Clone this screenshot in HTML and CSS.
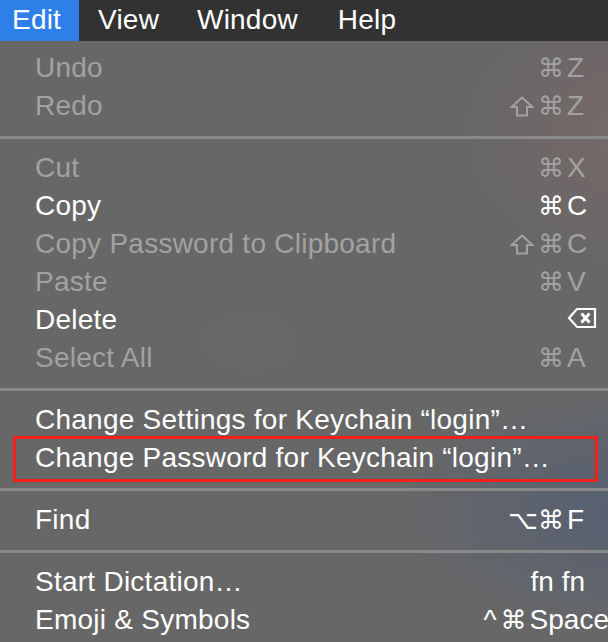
FILE: index.html
```html
<!DOCTYPE html>
<html lang="en">
<head>
<meta charset="utf-8">
<title>Edit menu</title>
<link rel="stylesheet" href="styles.css">
</head>
<body>
<div class="screen">
  <nav class="menubar">
    <span class="mb-item active">Edit</span>
    <span class="mb-item">View</span>
    <span class="mb-item">Window</span>
    <span class="mb-item">Help</span>
  </nav>
  <div class="menu">
    <div class="item disabled"><span class="label">Undo</span><span class="sc"><span class="mods">⌘</span><span class="key">Z</span></span></div>
    <div class="item disabled"><span class="label">Redo</span><span class="sc"><svg class="shift" width="24" height="21" viewBox="0 0 24 21"><path d="M12 1.5 L22.5 11 H17 V19.5 H7 V11 H1.5 Z" fill="none" stroke="currentColor" stroke-width="2" stroke-linejoin="miter"/></svg><span class="mods">⌘</span><span class="key">Z</span></span></div>
    <div class="sep"></div>
    <div class="item disabled"><span class="label">Cut</span><span class="sc"><span class="mods">⌘</span><span class="key">X</span></span></div>
    <div class="item"><span class="label">Copy</span><span class="sc"><span class="mods">⌘</span><span class="key">C</span></span></div>
    <div class="item disabled"><span class="label">Copy Password to Clipboard</span><span class="sc"><svg class="shift" width="24" height="21" viewBox="0 0 24 21"><path d="M12 1.5 L22.5 11 H17 V19.5 H7 V11 H1.5 Z" fill="none" stroke="currentColor" stroke-width="2" stroke-linejoin="miter"/></svg><span class="mods">⌘</span><span class="key">C</span></span></div>
    <div class="item disabled"><span class="label">Paste</span><span class="sc"><span class="mods">⌘</span><span class="key">V</span></span></div>
    <div class="item"><span class="label">Delete</span><span class="sc"><span class="key del"><svg width="30" height="22" viewBox="0 0 30 22"><path d="M2 11 L10 2 H28 V20 H10 Z" fill="none" stroke="#fff" stroke-width="2.2" stroke-linejoin="miter"/><path d="M14.5 6.5 L22.5 15.5 M22.5 6.5 L14.5 15.5" stroke="#fff" stroke-width="3"/></svg></span></span></div>
    <div class="item disabled"><span class="label">Select All</span><span class="sc"><span class="mods">⌘</span><span class="key">A</span></span></div>
    <div class="sep"></div>
    <div class="item"><span class="label">Change Settings for Keychain “login”…</span></div>
    <div class="item marked"><span class="label">Change Password for Keychain “login”…</span></div>
    <div class="sep"></div>
    <div class="item"><span class="label">Find</span><span class="sc"><span class="mods">⌥⌘</span><span class="key">F</span></span></div>
    <div class="sep"></div>
    <div class="item"><span class="label">Start Dictation…</span><span class="sc"><span class="plain">fn fn</span></span></div>
    <div class="item"><span class="label">Emoji &amp; Symbols</span><span class="sc overflow"><span class="mods caret">^</span><span class="mods">⌘</span><span class="key wide">Space</span></span></div>
  </div>
</div>
</body>
</html>
```

FILE: styles.css
```css
html, body {
  margin: 0;
  padding: 0;
}
body {
  width: 608px;
  height: 642px;
  overflow: hidden;
  font-family: "Liberation Sans", Arial, sans-serif;
  font-size: 28px;
  color: #fff;
}
.screen {
  width: 608px;
  height: 642px;
  overflow: hidden;
  display: flex;
  flex-direction: column;
  background: #686868;
}
.menubar {
  height: 41px;
  line-height: 39px;
  background: #323232;
  display: flex;
  flex-shrink: 0;
}
.mb-item {
  padding: 0 19px;
  color: #fff;
  letter-spacing: 0.2px;
}
.mb-item:first-child {
  padding-left: 12px;
  padding-right: 18px;
}
.mb-item:nth-child(3) {
  padding-right: 21px;
}
.mb-item.active {
  background: #2e7fe8;
}
.menu {
  flex: 1;
  padding-top: 8px;
  background:
    radial-gradient(ellipse 260px 200px at 640px 90px, rgba(145, 105, 105, 0.4), rgba(145, 105, 105, 0) 70%),
    radial-gradient(ellipse 330px 170px at 640px 470px, rgba(70, 90, 125, 0.55), rgba(70, 90, 125, 0) 75%),
    radial-gradient(ellipse 300px 200px at 250px 300px, rgba(110, 100, 100, 0.2), rgba(110, 100, 100, 0) 70%),
    #676767;
}
.item {
  height: 38px;
  line-height: 38px;
  display: flex;
  align-items: baseline;
  padding: 0 21px 0 35px;
  white-space: nowrap;
  position: relative;
}
.label {
  letter-spacing: 0.25px;
}
.item.disabled {
  color: #a2a2a2;
}
.sc {
  margin-left: auto;
  display: flex;
  align-items: baseline;
}
.shift {
  margin-right: 4px;
  align-self: center;
  margin-top: 1px;
}
.mods {
  font-family: "DejaVu Sans", sans-serif;
  font-size: 26px;
  margin-right: 3px;
}
.mods.caret {
  font-family: "Liberation Sans", sans-serif;
  font-size: 28px;
  margin-right: 4px;
}
.key {
  width: 20px;
}
.key.wide {
  width: auto;
}
.key.del {
  width: 30px;
  margin-right: -10px;
  align-self: center;
  display: flex;
  align-items: center;
}
.sc.overflow {
  margin-right: -22px;
}
.plain {
  margin-right: 2px;
}
.sep {
  height: 24px;
  display: flex;
  flex-direction: column;
  justify-content: center;
}
.sep::before {
  content: "";
  display: block;
  height: 3px;
  margin-top: 1px;
  background: #8b8b8b;
  opacity: 0.95;
}
.item.marked::after {
  content: "";
  position: absolute;
  left: 13px;
  right: 10px;
  top: -3px;
  bottom: -5px;
  border: 3px solid #f0201c;
}
```
